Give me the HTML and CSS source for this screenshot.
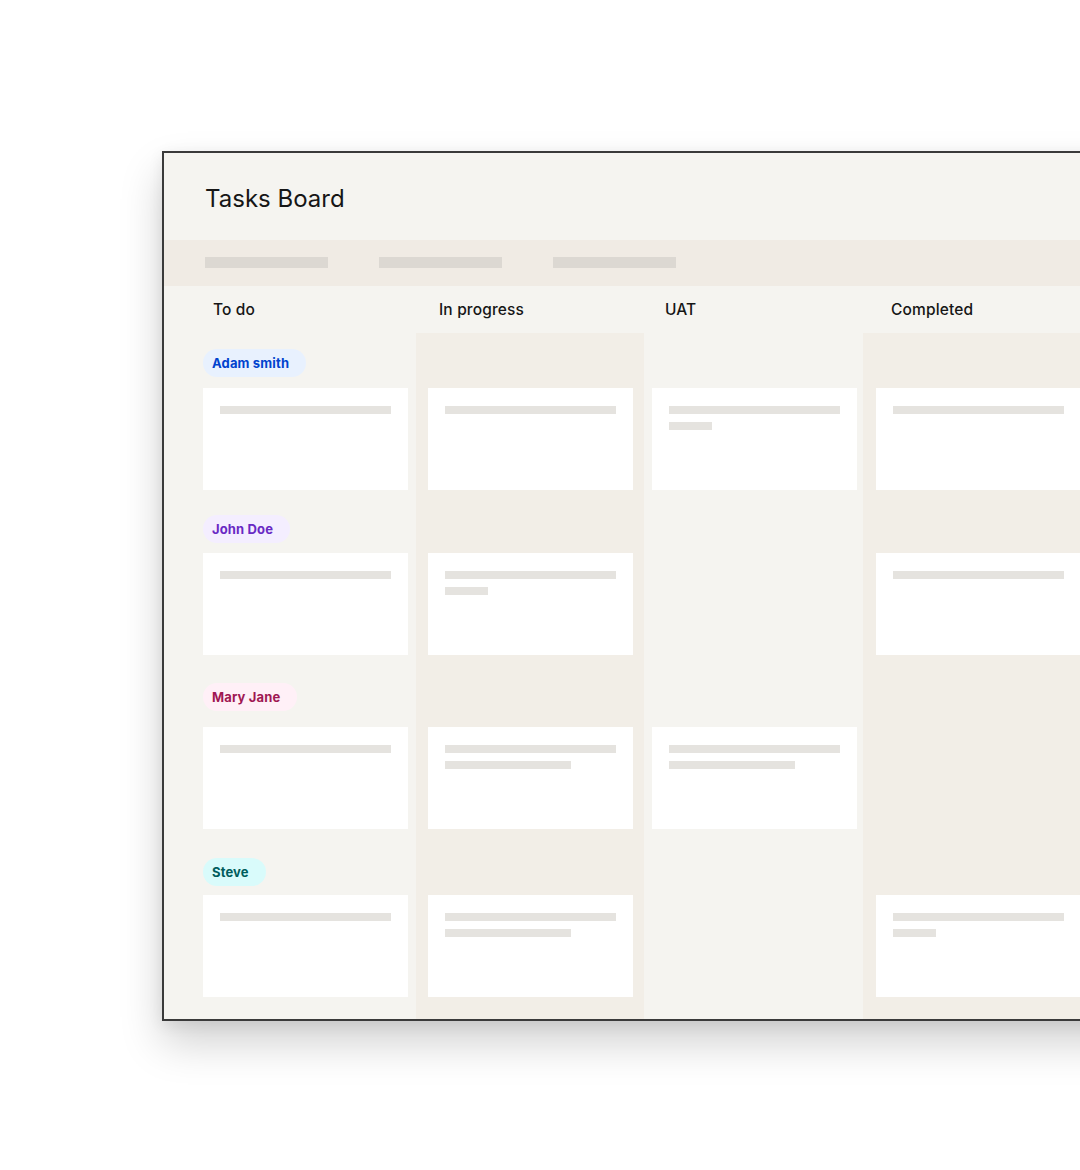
FILE: index.html
```html
<!DOCTYPE html>
<html lang="en">
<head>
<meta charset="utf-8">
<title>Tasks Board</title>
<link rel="stylesheet" href="styles.css">
</head>
<body>
<div class="stage">
  <section class="frame">
    <header class="frame-head">
      <h1 class="title">Tasks Board</h1>
    </header>
    <nav class="tabs">
      <span class="tab-ph"></span>
      <span class="tab-ph"></span>
      <span class="tab-ph"></span>
    </nav>
    <div class="board">
      <div class="stripe col-prog"></div>
      <div class="stripe col-done"></div>

      <div class="col-head col-todo">To do</div>
      <div class="col-head col-prog">In progress</div>
      <div class="col-head col-uat">UAT</div>
      <div class="col-head col-done">Completed</div>

      <span class="tag tag-blue lane-a">Adam smith</span>
      <div class="card col-todo lane-a"><i class="bar"></i></div>
      <div class="card col-prog lane-a"><i class="bar"></i></div>
      <div class="card col-uat lane-a"><i class="bar"></i><i class="bar bar-short"></i></div>
      <div class="card col-done lane-a"><i class="bar"></i></div>

      <span class="tag tag-purple lane-b">John Doe</span>
      <div class="card col-todo lane-b"><i class="bar"></i></div>
      <div class="card col-prog lane-b"><i class="bar"></i><i class="bar bar-short"></i></div>
      <div class="card col-done lane-b"><i class="bar"></i></div>

      <span class="tag tag-magenta lane-c">Mary Jane</span>
      <div class="card col-todo lane-c"><i class="bar"></i></div>
      <div class="card col-prog lane-c"><i class="bar"></i><i class="bar bar-mid"></i></div>
      <div class="card col-uat lane-c"><i class="bar"></i><i class="bar bar-mid"></i></div>

      <span class="tag tag-teal lane-d">Steve</span>
      <div class="card col-todo lane-d"><i class="bar"></i></div>
      <div class="card col-prog lane-d"><i class="bar"></i><i class="bar bar-mid"></i></div>
      <div class="card col-done lane-d"><i class="bar"></i><i class="bar bar-short"></i></div>
    </div>
  </section>
</div>
</body>
</html>
```
FILE: styles.css
```css
html, body {
  margin: 0;
  padding: 0;
  background: #ffffff;
  overflow: hidden;
}

body {
  font-family: "Inter", "Noto Sans", "Liberation Sans", sans-serif;
  color: #161616;
  width: 1080px;
  height: 1170px;
}

.stage {
  padding: 151px 0 0 162px;
}

.frame {
  width: 1000px;
  background: #f5f4f0;
  border: 2px solid #3a3a3a;
  box-shadow: 0 22px 40px rgba(0, 0, 0, 0.18), 0 4px 14px rgba(0, 0, 0, 0.08);
}

.frame-head {
  height: 87px;
  padding-left: 41px;
  box-sizing: border-box;
  display: flex;
  align-items: flex-start;
}

.title {
  margin: 0;
  padding-top: 31px;
  font-size: 24px;
  font-weight: 400;
  line-height: 30px;
  letter-spacing: 0;
  color: #161616;
}

.tabs {
  height: 46px;
  background: #f0ebe4;
  display: flex;
  align-items: flex-start;
  gap: 51px;
  padding: 17px 0 0 41px;
  box-sizing: border-box;
}

.tab-ph {
  display: block;
  width: 123px;
  height: 11px;
  background: #dcd8d2;
}

.board {
  display: grid;
  grid-template-columns: 252px 228px 219px 228px 1fr;
  grid-template-rows: 47px 55px 102px 63px 102px 72px 102px 66px 102px 22px;
}

.stripe {
  grid-row: 2 / -1;
  background: #f2eee7;
}
.stripe.col-done {
  grid-column: 4 / -1;
}

.col-todo { grid-column: 1; --card-x: 39px; --head-x: 49px; }
.col-prog { grid-column: 2; --card-x: 12px; --head-x: 23px; }
.col-uat  { grid-column: 3; --card-x: 8px;  --head-x: 21px; }
.col-done { grid-column: 4; --card-x: 13px; --head-x: 28px; }

.col-head {
  grid-row: 1;
  padding-left: var(--head-x);
  padding-top: 14px;
  font-size: 15.5px;
  font-weight: 500;
  line-height: 20px;
  letter-spacing: 0.15px;
  color: #161616;
}

.lane-a.card { grid-row: 3; }
.lane-b.card { grid-row: 5; }
.lane-c.card { grid-row: 7; }
.lane-d.card { grid-row: 9; }

.tag {
  grid-column: 1;
  justify-self: start;
  align-self: end;
  margin-left: 39px;
  height: 28px;
  padding: 0 17px 0 9px;
  border-radius: 14px;
  display: inline-flex;
  align-items: center;
  font-size: 13px;
  font-weight: 650;
  letter-spacing: 0.15px;
}
.tag.lane-a { grid-row: 2; margin-bottom: 11px; }
.tag.lane-b { grid-row: 4; margin-bottom: 10px; }
.tag.lane-c { grid-row: 6; margin-bottom: 16px; }
.tag.lane-d { grid-row: 8; margin-bottom: 9px; }

.tag-blue    { background: #e8f1fe; color: #0043ce; }
.tag-purple  { background: #f4eeff; color: #6929c4; }
.tag-magenta { background: #fff0f7; color: #9f1853; }
.tag-teal    { background: #d9fbfb; color: #005d5d; }

.card {
  justify-self: start;
  margin-left: var(--card-x);
  width: 205px;
  height: 102px;
  box-sizing: border-box;
  background: #ffffff;
  padding: 18px 0 0 17px;
  display: flex;
  flex-direction: column;
  gap: 8px;
}

.bar {
  display: block;
  width: 171px;
  height: 8px;
  background: #e5e3df;
}
.bar-short { width: 43px; }
.bar-mid { width: 126px; }
```
